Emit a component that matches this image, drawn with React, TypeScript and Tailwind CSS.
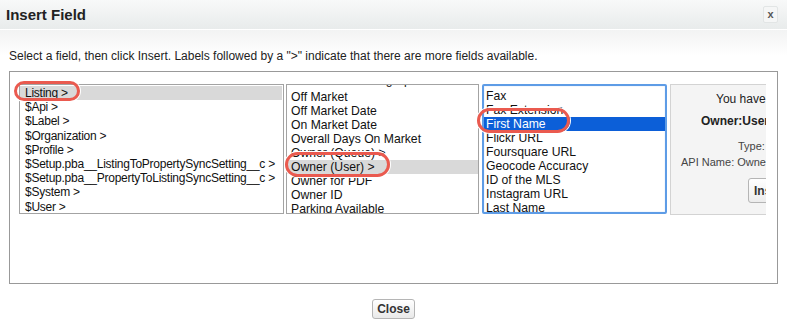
import React from "react";

const FONT = "font-['Liberation_Sans',Arial,Helvetica,sans-serif]";

const baseFields = [
  "Listing >",
  "$Api >",
  "$Label >",
  "$Organization >",
  "$Profile >",
  "$Setup.pba__ListingToPropertySyncSetting__c >",
  "$Setup.pba__PropertyToListingSyncSetting__c >",
  "$System >",
  "$User >",
];

const listingFields = [
  "Number of Parking Spaces",
  "Off Market",
  "Off Market Date",
  "On Market Date",
  "Overall Days On Market",
  "Owner (Queue) >",
  "Owner (User) >",
  "Owner for PDF",
  "Owner ID",
  "Parking Available",
];

const userFields = [
  "Fax",
  "Fax Extension",
  "First Name",
  "Flickr URL",
  "Foursquare URL",
  "Geocode Accuracy",
  "ID of the MLS",
  "Instagram URL",
  "Last Name",
];

/** Red pill the screenshot author drew round the chosen items. */
function Marker({ className }: { className: string }) {
  return (
    <div
      className={`absolute rounded-full border-[3px] border-[#ea5a4f] shadow-[0_0_0_1px_#fff] pointer-events-none ${className}`}
    />
  );
}

export default function App() {
  return (
    <div
      className={`relative w-[787px] h-[329px] overflow-hidden bg-white text-[#222] ${FONT}`}
    >
      <header className="h-[30px] flex items-center justify-between pl-[6px] pr-[9px] border-b border-white bg-[linear-gradient(to_bottom,#f8f9f9,#e8ebeb)]">
        <h2 className="text-[15px] font-bold leading-none text-[#222]">
          Insert Field
        </h2>
        <button className="w-[15px] h-[17px] flex items-center justify-center rounded-[2px] border border-[#e2e5e5] bg-[#f5f6f6] text-[11px] font-bold leading-none text-[#555]">
          x
        </button>
      </header>

      <div className="px-[9px] pt-[19px] bg-[linear-gradient(to_bottom,#f2f3f3,#ffffff_26px)]">
        <p className="text-[12px] leading-[14px]">
          Select a field, then click Insert. Labels followed by a "&gt;"
          indicate that there are more fields available.
        </p>

        <div className="mt-[8px] h-[213px] border border-[#999] pt-[12px] pl-[9px]">
          <div className="w-[747px] flex overflow-hidden text-[12.2px] leading-[14px] text-[#111]">
            {/* column 1 */}
            <div className="w-[265px] h-[130px] shrink-0 border border-[#a3a3a3] bg-white pt-[1px] pr-[1px] overflow-hidden tracking-[-0.25px] text-[12px]">
              {baseFields.map((f, i) => (
                <div
                  key={f}
                  className={`h-[14.2px] px-[5px] whitespace-nowrap ${
                    i === 0 ? "bg-[#d9d9d9]" : ""
                  }`}
                >
                  {f}
                </div>
              ))}
            </div>

            {/* column 2, scrolled a little */}
            <div className="ml-[2px] w-[193px] h-[130px] shrink-0 border border-[#a3a3a3] bg-white overflow-hidden">
              <div className="-mt-[9px]">
                {listingFields.map((f, i) => (
                  <div
                    key={f}
                    className={`h-[14px] px-[4px] whitespace-nowrap ${
                      f === "Owner (User) >" ? "bg-[#d9d9d9]" : ""
                    } ${i === 0 ? "relative -top-[3px]" : ""}`}
                  >
                    {f}
                  </div>
                ))}
              </div>
            </div>

            {/* column 3, focused */}
            <div className="ml-[3px] w-[185px] h-[130px] shrink-0 rounded-[2px] border-2 border-[#5e9ce6] shadow-[inset_0_0_1px_#8bb8ee] bg-white pt-[3px] overflow-hidden">
              {userFields.map((f) => (
                <div
                  key={f}
                  className={`h-[14px] px-[2px] whitespace-nowrap ${
                    f === "First Name" ? "bg-[#0c5fd8] text-white" : ""
                  }`}
                >
                  {f}
                </div>
              ))}
            </div>

            {/* column 4, details */}
            <div className="ml-[3px] w-[220px] h-[131px] shrink-0 border border-[#d3d3d3] bg-[#f4f4f4] pt-[7px] text-[12px] whitespace-nowrap">
              <div className="pl-[45px] leading-[14px] text-[#222]">
                You have selected the following field:
              </div>
              <div className="pl-[30px] mt-[8px] leading-[14px] font-bold text-[#222]">
                Owner:User.FirstName
              </div>
              <div className="pl-[67px] mt-[11px] text-[11px] leading-[14px] text-[#444]">
                Type: Text
              </div>
              <div className="pl-[10px] mt-[2px] text-[11px] leading-[14px] text-[#444]">
                API Name: Owner.FirstName
              </div>
              <button className="ml-[77px] mt-[9px] h-[25px] px-[5px] rounded-[3px] border border-[#b5b5b5] bg-[linear-gradient(to_bottom,#ffffff,#ececec)] text-[12px] font-bold text-[#333]">
                Insert
              </button>
            </div>
          </div>
        </div>

        <div className="flex justify-center mt-[15px]">
          <button className="w-[43px] h-[20px] rounded-[3px] border border-[#b5b5b5] bg-[linear-gradient(to_bottom,#ffffff,#e9e9e9)] text-[12px] font-bold leading-none text-[#333]">
            Close
          </button>
        </div>
      </div>

      <Marker className="left-[14px] top-[81px] w-[66px] h-[20px]" />
      <Marker className="left-[285px] top-[152px] w-[105px] h-[25px]" />
      <Marker className="left-[477px] top-[108px] w-[93px] h-[25px]" />
    </div>
  );
}
